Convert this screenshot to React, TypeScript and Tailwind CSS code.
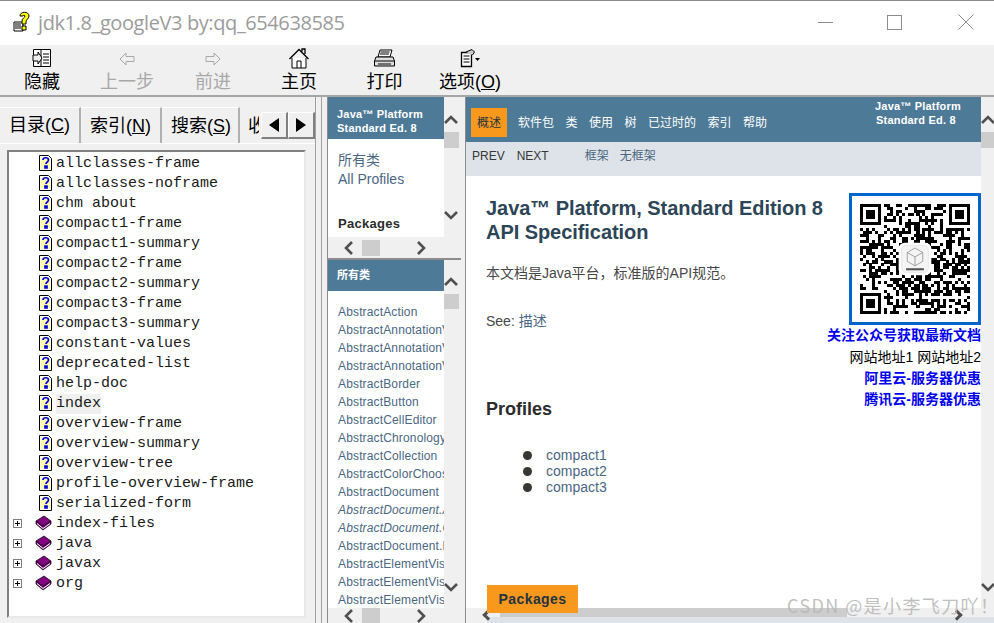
import React from 'react'

const sans = "font-['Liberation_Sans','Noto_Sans_CJK_SC',sans-serif]"

const docs = ['allclasses-frame', 'allclasses-noframe', 'chm about', 'compact1-frame', 'compact1-summary', 'compact2-frame', 'compact2-summary', 'compact3-frame', 'compact3-summary', 'constant-values', 'deprecated-list', 'help-doc', 'index', 'overview-frame', 'overview-summary', 'overview-tree', 'profile-overview-frame', 'serialized-form']
const books = ['index-files', 'java', 'javax', 'org']
const classes = [
  ['AbstractAction', 0], ['AbstractAnnotationValueVisitor6', 0], ['AbstractAnnotationValueVisitor7', 0], ['AbstractAnnotationValueVisitor8', 0],
  ['AbstractBorder', 0], ['AbstractButton', 0], ['AbstractCellEditor', 0], ['AbstractChronology', 0], ['AbstractCollection', 0],
  ['AbstractColorChooserPanel', 0], ['AbstractDocument', 0], ['AbstractDocument.AttributeContext', 1], ['AbstractDocument.Content', 1],
  ['AbstractDocument.ElementEdit', 0], ['AbstractElementVisitor6', 0], ['AbstractElementVisitor7', 0], ['AbstractElementVisitor8', 0],
] as const

function Chevron({ dir }: { dir: 'up' | 'down' | 'left' | 'right' }) {
  const d = { up: 'M1 9 L7 3 L13 9', down: 'M1 3 L7 9 L13 3', left: 'M9 1 L3 7 L9 13', right: 'M3 1 L9 7 L3 13' }[dir]
  const vertical = dir === 'up' || dir === 'down'
  return (
    <svg width={vertical ? 14 : 12} height={vertical ? 12 : 14} viewBox={vertical ? '0 0 14 12' : '0 0 12 14'} className='shrink-0'>
      <path d={d} fill='none' stroke='#505050' strokeWidth='2.6' />
    </svg>
  )
}

function DocIcon() {
  return (
    <svg width='13' height='16' viewBox='0 0 13 16' className='shrink-0'>
      <path d='M.5.5h9l3 3v12H.5z' fill='#fff' stroke='#000' />
      <path d='M2 2h7v2h2v10H2z' fill='#ffffa8' />
      <path d='M4 5c0-3 5.500-3 5.500 0 0 2-2.500 2-2.500 4M6 11h2v2H6z' fill='none' stroke='#0000e0' strokeWidth='1.700' />
    </svg>
  )
}

function BookIcon() {
  return (
    <svg width='17' height='16' viewBox='0 0 17 16' className='shrink-0'>
      <path d='M1 6L9 1l7 5-8 5.500z' fill='#800080' stroke='#000' strokeWidth='.7' />
      <path d='M1 6v3l7 6 8-6V6l-8 5.500z' fill='#800080' stroke='#000' strokeWidth='.7' />
      <path d='M2 8.500l6 5 7-5' fill='none' stroke='#fff' strokeWidth='1' />
    </svg>
  )
}

function Expander() {
  return (
    <svg width='9' height='9' viewBox='0 0 9 9' className='shrink-0'>
      <rect x='.5' y='.5' width='8' height='8' fill='#fff' stroke='#808080' />
      <path d='M2 4.500h5M4.500 2v5' stroke='#000' />
    </svg>
  )
}

function TreeRow({ label, book, hover }: { label: string; book?: boolean; hover?: boolean }) {
  return (
    <div className='flex items-center h-5'>
      <div className='w-[26px] pl-[4px] pb-[2px] shrink-0 flex'>{book && <Expander />}</div>
      <div className={book ? 'w-[21px] pb-[2px] shrink-0 flex' : 'w-[4px] shrink-0'}>{book && <BookIcon />}</div>
      {!book && <div className='w-[17px] pb-[2px] flex shrink-0'><DocIcon /></div>}
      <span className={`font-['Liberation_Mono',monospace] text-[15px] leading-5 text-[#1a1a1a] whitespace-pre ${hover ? 'bg-[#f0f0f0]' : ''}`}>{label}</span>
    </div>
  )
}

function Tab({ label, hot, active }: { label: string; hot: string; active?: boolean }) {
  return (
    <div className={`w-[81px] flex items-center justify-center border-r-2 border-[#b0b0b0] border-t border-t-white bg-[#f0f0f0] text-[18px] text-black ${active ? 'h-[38px] mb-[-2px] pb-[2px] z-10' : 'h-[36px] pt-[2px]'}`}>
      {label}(<u>{hot}</u>)
    </div>
  )
}

function ToolButton({ label, muted, children, width }: { label: React.ReactNode; muted?: boolean; children: React.ReactNode; width: string }) {
  return (
    <div className={`${width} flex flex-col items-center shrink-0`}>
      <div className='h-[25px] flex items-center justify-center'>{children}</div>
      <span className={`text-[18px] leading-[22px] ${muted ? 'text-[#a8a8a8]' : 'text-black'}`}>{label}</span>
    </div>
  )
}

function ArrowButton({ d }: { d: string }) {
  return (
    <div className='w-[27px] h-[27px] flex items-center justify-center bg-[#f0f0f0] border-r-2 border-b-2 border-[#808080] border-t border-l border-t-white border-l-white'>
      <svg width='10' height='14' viewBox='0 0 10 14'><path d={d} fill='#000' /></svg>
    </div>
  )
}

function VScrollBar({ upTop, thumbH, gap }: { upTop: string; thumbH: string; gap: string }) {
  return (
    <div className='w-[17px] bg-[#f0f0f0] flex flex-col items-start shrink-0'>
      <div className={upTop}><Chevron dir='up' /></div>
      <div className={`w-[15px] ${thumbH} bg-[#cdcdcd] mt-[6px]`} />
      <div className={gap}><Chevron dir='down' /></div>
    </div>
  )
}

function HScrollBar({ height }: { height: string }) {
  return (
    <div className={`${height} bg-[#f0f0f0] flex items-center pl-[15px] shrink-0`}>
      <Chevron dir='left' />
      <div className='w-[18px] h-[16px] bg-[#cdcdcd] ml-[7px]' />
      <div className='ml-[35px]'><Chevron dir='right' /></div>
    </div>
  )
}

// fake qr pattern, fixed seed so it stays the same between runs
function QrCode() {
  const n = 37
  const cells: React.ReactNode[] = []
  let seed = 654638585
  const finder = (x: number, y: number) => x >= 0 && y >= 0 && x < 8 && y < 8
  for (let y = 0; y < n; y++) {
    for (let x = 0; x < n; x++) {
      seed = (seed * 1103515245 + 12345) & 0x7fffffff
      const on = (seed >> 16) % 100 < 52
      if (finder(x, y) || finder(n - 1 - x, y) || finder(x, n - 1 - y)) continue
      if (on) cells.push(<rect key={`${x}-${y}`} x={x} y={y} width='1.02' height='1.02' />)
    }
  }
  const eye = (x: number, y: number) => (
    <g key={`${x}-${y}`}>
      <path d={`M${x} ${y}h7v7h-7z M${x + 1} ${y + 1}v5h5v-5z`} fillRule='evenodd' />
      <rect x={x + 2} y={y + 2} width='3' height='3' />
    </g>
  )
  return (
    <svg width='110' height='110' viewBox='0 0 37 37' shapeRendering='crispEdges' className='block'>
      {cells}
      {eye(0, 0)}
      {eye(30, 0)}
      {eye(0, 30)}
      <g shapeRendering='auto'>
        <rect x='13' y='13' width='11' height='11' rx='2' fill='#fff' />
        <rect x='14' y='14' width='9' height='9' rx='1.500' fill='#f4f4f4' stroke='#ddd' strokeWidth='.2' />
        <path d='M18.500 14.800l2.600 1.500v3l-2.600 1.500-2.600-1.500v-3zM15.900 16.300l2.600 1.500 2.600-1.500M18.500 17.800v3' fill='none' stroke='#888' strokeWidth='.25' />
        <rect x='15.500' y='21.600' width='6' height='.7' fill='#555' />
      </g>
    </svg>
  )
}

export default function App() {
  return (
    <div className={`w-[994px] h-[623px] overflow-hidden relative bg-[#f0f0f0] flex flex-col ${sans}`}>
      {/* title bar */}
      <div className='h-[45px] bg-white border-t border-[#8c8c8c] flex items-center shrink-0'>
        <svg width='17' height='22' viewBox='0 0 17 22' className='ml-[13px] mb-[2px]'>
          <path d='M1 11h9v9H1z' fill='#fff' stroke='#000' />
          <path d='M2 13h6M2 15h6M2 17h6' stroke='#000' />
          <path d='M7 5c0-5 9-5 9 0 0 3-3 3-3 6v2H9v-3c0-3 3-3 3-5 0-1-2-1-2 0z' fill='#ffff00' stroke='#000' />
          <path d='M9 15h4v4H9z' fill='#ffff00' stroke='#000' />
        </svg>
        <span className="ml-[8px] text-[20px] text-[#9c9c9c] font-['Open_Sans',sans-serif] tracking-[-0.4px]">jdk1.8_googleV3 by:qq_654638585</span>
        <div className='ml-auto flex items-center pb-[2px]'>
          <div className='w-[15px] h-px bg-[#8c8c8c]' />
          <div className='w-[15px] h-[15px] border border-[#8c8c8c] ml-[54px]' />
          <svg width='16' height='16' viewBox='0 0 16 16' className='ml-[56px] mr-[20px]'><path d='M.5.5l15 15M15.500.5l-15 15' stroke='#8c8c8c' /></svg>
        </div>
      </div>

      {/* toolbar */}
      <div className='h-[52px] flex shrink-0 pt-[1px] border-b-2 border-[#a6a6a6]'>
        <ToolButton label='隐藏' width='w-[84px]'>
          <svg width='20' height='19' viewBox='0 0 20 19'>
            <path d='M1.500.500h17v17h-17z' fill='#fff' stroke='#000' />
            <path d='M9 1v16M11 5h6M11 8h6M11 11h6M11 14h6' stroke='#000' />
            <path d='M1 6h5V3l4 6-4 6v-3H1z' fill='#eee' stroke='#000' />
          </svg>
        </ToolButton>
        <ToolButton label='上一步' muted width='w-[86px]'>
          <svg width='16' height='14' viewBox='0 0 16 14'><path d='M7 1L1 7l6 6V9.500h8v-5H7z' fill='none' stroke='#a8a8a8' /></svg>
        </ToolButton>
        <ToolButton label='前进' muted width='w-[86px]'>
          <svg width='16' height='14' viewBox='0 0 16 14'><path d='M9 1l6 6-6 6V9.500H1v-5h8z' fill='none' stroke='#a8a8a8' /></svg>
        </ToolButton>
        <ToolButton label='主页' width='w-[86px]'>
          <svg width='20' height='21' viewBox='0 0 20 21'>
            <path d='M3 10v10h14V10' fill='#fff' stroke='#000' />
            <path d='M8 20v-7h4v7' fill='none' stroke='#000' />
            <path d='M.5 11L10 1.500 19.500 11M13 3.500V1h3v5' fill='none' stroke='#000' strokeWidth='1.300' />
          </svg>
        </ToolButton>
        <ToolButton label='打印' width='w-[85px]'>
          <svg width='21' height='19' viewBox='0 0 21 19'>
            <path d='M6 1h12l-2 7H4z' fill='#fff' stroke='#000' />
            <path d='M6.500 3h9M6 5h9' stroke='#000' />
            <path d='M2 8h17l1.500 4v5h-20v-5z' fill='#ddd' stroke='#000' />
            <path d='M1 12h19M4 15h13' stroke='#000' />
          </svg>
        </ToolButton>
        <ToolButton label={<>选项(<u>O</u>)</>} width='w-[86px]'>
          <svg width='20' height='19' viewBox='0 0 20 19'>
            <path d='M1.500 3.500h10v14h-10z' fill='#fff' stroke='#000' strokeWidth='1.300' />
            <path d='M3.500 7h6M3.500 10h6M3.500 13h6' stroke='#000' />
            <path d='M6 3l6-2.500 2.500 2.500-2 3' fill='#ccc' stroke='#000' />
            <path d='M15 9h5l-2.500 3z' fill='#000' />
          </svg>
        </ToolButton>
      </div>

      <div className='flex flex-1 min-h-0'>
        {/* contents pane */}
        <div className='w-[322px] shrink-0 border-r border-[#a0a0a0]'>
          <div className='w-[316px] h-full flex flex-col border-r border-[#a0a0a0]'>
            <div className='flex items-end h-[47px] shrink-0 relative overflow-hidden border-b border-white'>
              <Tab label='目录' hot='C' active />
              <Tab label='索引' hot='N' />
              <div className='w-[78px] h-[36px] pt-[2px] pl-[2px] flex items-center justify-center border-r-2 border-[#b0b0b0] border-t border-t-white text-[18px] text-black'>搜索(<u>S</u>)</div>
              <div className='w-[19px] h-[36px] pt-[2px] pl-[8px] overflow-hidden text-[18px] text-black leading-[34px] whitespace-nowrap'>收藏</div>
              <div className='flex mb-[-1px] ml-[2px] pb-[5px]'>
                <ArrowButton d='M10 0v14L0 7z' />
                <ArrowButton d='M0 0v14l10-7z' />
              </div>
            </div>
            <div className='flex-1 min-h-0 ml-[7px] mt-[6px] mb-[5px] w-[299px] border-t-2 border-l-2 border-[#808080] border-r-2 border-r-[#e8e8e8] border-b-2 border-b-[#e8e8e8] bg-white pt-[2px]'>
              {docs.map(d => <TreeRow key={d} label={d} hover={d === 'index'} />)}
              {books.map(b => <TreeRow key={b} label={b} book />)}
            </div>
          </div>
        </div>
        <div className='w-[6px] shrink-0 border-r border-[#8c8c8c]' />

        {/* package and class frames */}
        <div className='w-[133px] shrink-0 flex flex-col'>
          <div className='h-[163px] flex flex-col shrink-0 border-b-2 border-[#8c8c8c]'>
            <div className='flex flex-1 min-h-0'>
              <div className='w-[116px] shrink-0 bg-white overflow-hidden'>
                <div className='h-[42px] bg-[#4d7a97] pl-[9px] pt-[10px] text-[11px] font-bold leading-[14px] text-white whitespace-nowrap tracking-[0.2px]'>Java™ Platform<br />Standard Ed. 8</div>
                <div className='pl-[10px] pt-[12px] text-[14px] leading-[19px] text-[#4a6782]'>所有类<br />All Profiles</div>
                <div className='pl-[10px] pt-[25px] text-[13px] font-bold leading-[19px] text-[#2c2c2c] tracking-[0.3px]'>Packages</div>
              </div>
              <VScrollBar upTop='pt-[17px]' thumbH='h-[16px]' gap='mt-[61px]' />
            </div>
            <HScrollBar height='h-[21px]' />
          </div>
          <div className='flex-1 min-h-0 flex flex-col'>
            <div className='flex flex-1 min-h-0'>
              <div className='w-[116px] shrink-0 bg-white overflow-hidden'>
                <div className='h-[31px] bg-[#4d7a97] pl-[9px] flex items-center text-[11px] font-bold text-white'>所有类</div>
                <div className='pl-[10px] pt-[12px]'>
                  {classes.map(([name, italic], i) => (
                    <div key={i} className={`h-[18px] text-[12px] leading-[18px] text-[#4a6782] whitespace-nowrap tracking-[0.15px] ${italic ? 'italic' : ''}`}>{name}</div>
                  ))}
                </div>
              </div>
              <VScrollBar upTop='pt-[16px]' thumbH='h-[15px]' gap='mt-[272px]' />
            </div>
            <HScrollBar height='h-[15px]' />
          </div>
        </div>
        <div className='w-[5px] shrink-0 border-r border-[#8c8c8c]' />

        {/* document */}
        <div className='flex-1 min-w-0 flex flex-col relative'>
          <div className='flex flex-1 min-h-0'>
            <div className='w-[515px] shrink-0 bg-white flex flex-col overflow-hidden'>
              <div className='h-[45px] bg-[#4d7a97] flex shrink-0 text-[12px] text-white'>
                <div className='flex items-start pt-[11px] pl-[5px]'>
                  <div className='w-[36px] h-[29px] bg-[#f8981d] text-[#253441] flex items-center justify-center'>概述</div>
                  <div className='flex h-[29px] items-center gap-[11.5px] ml-[11px] whitespace-nowrap'>
                    <span>软件包</span><span>类</span><span>使用</span><span>树</span><span>已过时的</span><span>索引</span><span>帮助</span>
                  </div>
                </div>
                <div className='ml-auto w-[106px] pt-[2px] text-[11px] font-bold leading-[14px] tracking-[0.2px] whitespace-nowrap'>Java™ Platform<br /><span className='ml-px'>Standard Ed. 8</span></div>
              </div>
              <div className='h-[34px] bg-[#dee3e9] flex shrink-0 pl-[6px] pt-[5px] text-[12px] leading-[18px] text-[#353833]'>
                <span>PREV</span><span className='ml-[12px]'>NEXT</span>
                <span className='ml-[36px] text-[#4a6782]'>框架</span><span className='ml-[11px] text-[#4a6782]'>无框架</span>
              </div>
              <div className='flex flex-1 min-h-0'>
                <div className='flex-1 pl-[20px] pt-[20px]'>
                  <div className='text-[20px] font-bold leading-6 text-[#2c4557] whitespace-nowrap tracking-[-0.06px]'>Java™ Platform, Standard Edition 8<br />API Specification</div>
                  <div className='mt-[19px] text-[14px] leading-5 text-[#474747]'>本文档是Java平台，标准版的API规范。</div>
                  <div className='mt-[28px] text-[14px] leading-5 text-[#474747]'>See: <span className='text-[#4a6782]'>描述</span></div>
                  <div className='mt-[66px] text-[18px] font-bold leading-6 text-[#2c2c2c]'>Profiles</div>
                  <div className='mt-[26px] pl-[37px] flex flex-col'>
                    {['compact1', 'compact2', 'compact3'].map(p => (
                      <div key={p} className='flex items-center h-4'>
                        <div className='w-[9px] h-[9px] rounded-full bg-[#353833] mr-[14px]' />
                        <span className='text-[14px] text-[#4a6782]'>{p}</span>
                      </div>
                    ))}
                  </div>
                </div>
                <div className='w-[156px] shrink-0 pt-[17px] flex flex-col items-end text-[14px] leading-[21px] font-bold text-[#0000ee] whitespace-nowrap'>
                  <div className='border-[3px] border-[#0066cc] p-[8px] bg-white'><QrCode /></div>
                  <div>关注公众号获取最新文档</div>
                  <div className='mt-px font-normal text-black'>网站地址1 网站地址2</div>
                  <div>阿里云-服务器优惠</div>
                  <div>腾讯云-服务器优惠</div>
                </div>
              </div>
            </div>
            <div className='w-[13px] bg-[#f0f0f0] flex flex-col items-center shrink-0 overflow-hidden'>
              <div className='pt-[17px]'><Chevron dir='up' /></div>
              <div className='w-[13px] h-[16px] bg-[#cdcdcd] mt-[6px]' />
              <div className='mt-[433px]'><Chevron dir='down' /></div>
            </div>
          </div>
          {/* page horizontal scrollbar + cut-off sub nav */}
          <div className='h-[9px] bg-[#f0f0f0] flex shrink-0'>
            <div className='w-[34px] shrink-0 pt-[3px] pl-[18px]'><div className='w-[8px] h-[8px] border-l-[3px] border-t-[3px] border-[#505050] rotate-[-45deg]' /></div>
            <div className='w-[347px] bg-[#cdcdcd]' />
            <div className='ml-[106px] pt-[3px]'><div className='w-[8px] h-[8px] border-r-[3px] border-t-[3px] border-[#505050] rotate-[45deg]' /></div>
          </div>
          <div className='h-[6px] ml-[21px] bg-[#dee3e9] shrink-0' />
          {/* orange tab sticks out over the scrollbar */}
          <div className='absolute left-[21px] top-[488px] w-[91px] h-[28px] bg-[#f8981d] text-[#253441] text-[14px] font-bold flex items-center justify-center tracking-[0.4px]'>Packages</div>
        </div>
      </div>

      {/* csdn watermark */}
      <div className="absolute left-[787px] top-[594px] text-[18px] leading-[22px] text-[#b8b8b8]/90 whitespace-nowrap font-['Noto_Sans_CJK_SC',sans-serif] tracking-[1.4px]">CSDN @是小李飞刀吖！</div>
    </div>
  )
}
